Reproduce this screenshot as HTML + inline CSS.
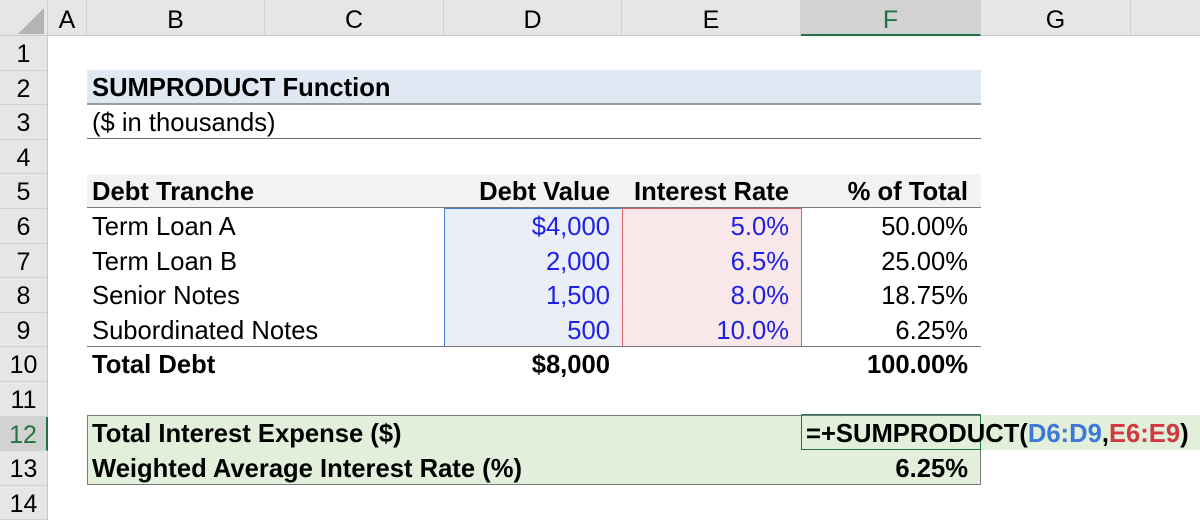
<!DOCTYPE html>
<html><head><meta charset="utf-8"><style>
*{margin:0;padding:0;box-sizing:border-box}
body{width:1200px;height:522px;overflow:hidden;background:#fff;font-family:"Liberation Sans",Arial,sans-serif;font-size:25.6px;color:#000;position:relative}
.a{position:absolute}
.ch{position:absolute;top:0;height:36px;background:#e6e6e6;border-right:1px solid #cfcfcf;border-bottom:1px solid #c8c8c8;text-align:center;line-height:40px;font-size:25px}
.rh{position:absolute;left:0;width:48px;height:34.6px;background:#e6e6e6;border-bottom:1px solid #d0d0d0;border-right:1px solid #c8c8c8;text-align:center;line-height:37px;font-size:25px}
.t{position:absolute;height:34.6px;line-height:37px;white-space:nowrap}
.r{text-align:right}
.b{font-weight:bold}
.bl{color:#1f1fe6}
</style></head><body>
<div class="ch" style="left:0;width:48px"></div>
<svg class="a" style="left:16px;top:8px" width="28" height="26"><polygon points="28,0 28,26 2,26" fill="#b4b4b4"/></svg>
<div class="ch" style="left:48px;width:39px">A</div>
<div class="ch" style="left:87px;width:178px">B</div>
<div class="ch" style="left:265px;width:179px">C</div>
<div class="ch" style="left:444px;width:178px">D</div>
<div class="ch" style="left:622px;width:179px">E</div>
<div class="ch" style="left:801px;width:180px;background:#d2d2d2;color:#217346;border-bottom:2px solid #217346">F</div>
<div class="ch" style="left:981px;width:150px">G</div>
<div class="ch" style="left:1131px;width:69px;border-right:none"></div>
<div class="rh" style="top:36px">1</div>
<div class="rh" style="top:70.6px">2</div>
<div class="rh" style="top:105.2px">3</div>
<div class="rh" style="top:139.8px">4</div>
<div class="rh" style="top:174.4px">5</div>
<div class="rh" style="top:209px">6</div>
<div class="rh" style="top:243.6px">7</div>
<div class="rh" style="top:278.2px">8</div>
<div class="rh" style="top:312.8px">9</div>
<div class="rh" style="top:347.4px">10</div>
<div class="rh" style="top:382px">11</div>
<div class="rh" style="top:416.6px;background:#d2d2d2;color:#217346;border-right:2px solid #217346">12</div>
<div class="rh" style="top:451.2px">13</div>
<div class="rh" style="top:485.8px">14</div>
<div class="a" style="left:87px;top:70px;width:894px;height:35px;background:#dfe8f3;border-bottom:2px solid #9a9a9a"></div>
<div class="a" style="left:87px;top:138px;width:894px;height:1px;background:#6a6a6a"></div>
<div class="a" style="left:87px;top:174px;width:894px;height:34px;background:#f2f2f2;border-bottom:1px solid #7a7a7a"></div>
<div class="a" style="left:444px;top:208px;width:179px;height:139px;background:#eaeef7;border:1px solid #4a7fd0"></div>
<div class="a" style="left:622px;top:208px;width:180px;height:139px;background:#f8e8e9;border:1px solid #d6636c"></div>
<div class="a" style="left:87px;top:346px;width:894px;height:1px;background:#7a7a7a"></div>
<div class="a" style="left:87px;top:415px;width:894px;height:70px;background:#e2efda;border:1px solid #7a7a7a"></div>
<div class="a" style="left:981px;top:415px;width:219px;height:35px;background:#e2efda"></div>
<div class="a" style="left:801px;top:414px;width:180px;height:36px;border:1px solid #217346"></div>
<div class="t b" style="left:92px;top:70px">SUMPRODUCT Function</div>
<div class="t" style="left:92px;top:105px">($ in thousands)</div>
<div class="t b" style="left:92px;top:174px">Debt Tranche</div>
<div class="t b r" style="left:400px;width:210px;top:174px">Debt Value</div>
<div class="t b r" style="left:600px;width:189px;top:174px">Interest Rate</div>
<div class="t b r" style="left:781px;width:187px;top:174px">% of Total</div>
<div class="t" style="left:92px;top:209px">Term Loan A</div>
<div class="t" style="left:92px;top:243.6px">Term Loan B</div>
<div class="t" style="left:92px;top:278.2px">Senior Notes</div>
<div class="t" style="left:92px;top:312.8px">Subordinated Notes</div>
<div class="t r bl" style="left:444px;width:166px;top:209px">$4,000</div>
<div class="t r bl" style="left:444px;width:166px;top:243.6px">2,000</div>
<div class="t r bl" style="left:444px;width:166px;top:278.2px">1,500</div>
<div class="t r bl" style="left:444px;width:166px;top:312.8px">500</div>
<div class="t r bl" style="left:622px;width:167px;top:209px">5.0%</div>
<div class="t r bl" style="left:622px;width:167px;top:243.6px">6.5%</div>
<div class="t r bl" style="left:622px;width:167px;top:278.2px">8.0%</div>
<div class="t r bl" style="left:622px;width:167px;top:312.8px">10.0%</div>
<div class="t r" style="left:801px;width:167px;top:209px">50.00%</div>
<div class="t r" style="left:801px;width:167px;top:243.6px">25.00%</div>
<div class="t r" style="left:801px;width:167px;top:278.2px">18.75%</div>
<div class="t r" style="left:801px;width:167px;top:312.8px">6.25%</div>
<div class="t b" style="left:92px;top:347.4px">Total Debt</div>
<div class="t b r" style="left:444px;width:166px;top:347.4px">$8,000</div>
<div class="t b r" style="left:801px;width:167px;top:347.4px">100.00%</div>
<div class="t b" style="left:92px;top:416px">Total Interest Expense ($)</div>
<div class="t b" style="left:92px;top:450.6px">Weighted Average Interest Rate (%)</div>
<div class="t b r" style="left:801px;width:167px;top:450.6px">6.25%</div>
<div class="t b" style="left:806px;top:416px">=+SUMPRODUCT(<span style="color:#3d78d8">D6:D9</span>,<span style="color:#d0393f">E6:E9</span>)</div>
</body></html>
